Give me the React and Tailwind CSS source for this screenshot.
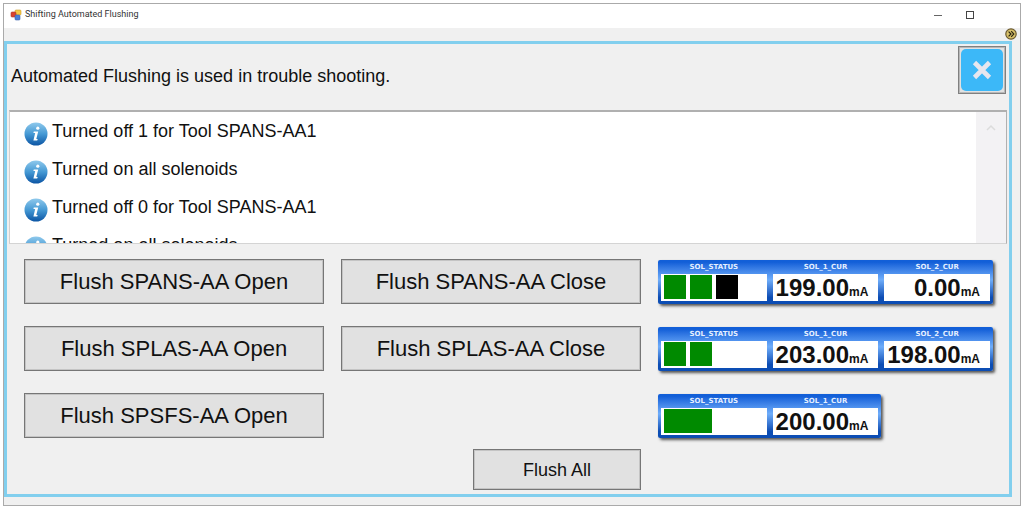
import { useState } from "react";
import clsx from "clsx";

const messages = [
  "Turned off 1 for Tool SPANS-AA1",
  "Turned on all solenoids",
  "Turned off 0 for Tool SPANS-AA1",
  "Turned on all solenoids",
];

const tools = [
  {
    name: "SPANS-AA",
    canClose: true,
    status: ["w-[22px] bg-[#008a00]", "w-[22px] bg-[#008a00]", "w-[22px] bg-black"],
    currents: ["199.00", "0.00"],
  },
  {
    name: "SPLAS-AA",
    canClose: true,
    status: ["w-[22px] bg-[#008a00]", "w-[22px] bg-[#008a00]"],
    currents: ["203.00", "198.00"],
  },
  {
    name: "SPSFS-AA",
    canClose: false,
    status: ["w-[48px] bg-[#008a00]"],
    currents: ["200.00"],
  },
];

const AppIcon = () => (
  <svg viewBox="0 0 12 12" className="h-3 w-3" aria-hidden="true">
    <rect x="5" y="1" width="6" height="5" rx="1" fill="#f5c945" stroke="#c99a2a" strokeWidth="0.6" />
    <rect x="1" y="3" width="5" height="5" rx="1" fill="#d9432f" stroke="#a93a2c" strokeWidth="0.6" />
    <rect x="5" y="6" width="5" height="5" rx="1" fill="#4a7fd8" stroke="#3a62ad" strokeWidth="0.6" />
  </svg>
);

const InfoIcon = () => (
  <svg viewBox="0 0 24 24" className="h-6 w-6 shrink-0" aria-hidden="true">
    <defs>
      <linearGradient id="infoFill" x1="0" y1="0" x2="0" y2="1">
        <stop offset="0" stopColor="#8fc9ec" />
        <stop offset="0.5" stopColor="#4599d4" />
        <stop offset="1" stopColor="#0c55a4" />
      </linearGradient>
    </defs>
    <circle cx="12" cy="12" r="11.5" fill="url(#infoFill)" />
    <circle cx="13.8" cy="6.2" r="1.6" fill="#fff" />
    <path d="M9.8 9.6h4.4l-1.9 7.4h1.4l-.5 1.5H9.400l1.8-7.400H9.400z" fill="#fff" />
  </svg>
);

const OverflowIcon = () => (
  <svg viewBox="0 0 12 12" className="h-3 w-3" aria-hidden="true">
    <circle cx="6" cy="6" r="5.2" fill="#d9c26a" stroke="#6b5a30" strokeWidth="1.2" />
    <path d="M3.6 3.6 6 6 3.6 8.4M6.200 3.200 8.800 6 6.200 8.800" fill="none" stroke="#2b2512" strokeWidth="1.2" />
  </svg>
);

const CloseIcon = () => (
  <svg viewBox="0 0 42 42" className="h-[42px] w-[42px]" aria-hidden="true">
    <rect width="42" height="42" rx="5" fill="#3cb8f8" />
    <path d="M13.500 13.500 28.500 28.500M28.500 13.500 13.500 28.500" stroke="#e6e6ee" strokeWidth="4.600" />
  </svg>
);

const TitleBar = () => (
  <header className="flex h-6 items-center bg-white pb-[2px] pl-[6px] pr-2">
    <AppIcon />
    <h1 className="ml-[3px] font-['Roboto',sans-serif] text-[9px] text-[#333]">Shifting Automated Flushing</h1>
    <div className="ml-auto flex items-center gap-3">
      <button type="button" aria-label="Minimize" className="flex h-5 w-5 items-center justify-center">
        <span className="h-px w-2 bg-[#666]" />
      </button>
      <button type="button" aria-label="Maximize" className="flex h-5 w-5 items-center justify-center">
        <span className="h-2 w-2 border border-[#444]" />
      </button>
      <button type="button" aria-label="Close window" className="h-5 w-5" />
    </div>
  </header>
);

const FlushButton = ({ children, className, onClick }) => (
  <button
    type="button"
    onClick={onClick}
    className={clsx(
      "border border-[#767676] bg-[#e1e1e1] text-[#111] ring-1 ring-inset ring-[#c4c4c4] hover:bg-[#e5f1fb]",
      className
    )}
  >
    {children}
  </button>
);

const GaugeCell = ({ label, children }) => (
  <div className="flex min-w-0 flex-1 flex-col">
    <div className="h-[14px] text-center font-['DejaVu_Sans',sans-serif] text-[7px] font-bold leading-[14px] text-[#e4efff]">
      {label}
    </div>
    <div className="mx-[3px] flex h-[27px] items-center bg-white">{children}</div>
  </div>
);

const Gauge = ({ tool }) => (
  <div
    className={clsx(
      "flex h-11 rounded-xs bg-linear-to-b from-[#125fd8] from-5% via-[#6fadfa] via-45% to-[#0c4db4] to-85% shadow-[2px_2px_3px_#555]",
      tool.currents.length === 2 ? "w-full" : "w-2/3"
    )}
  >
    <GaugeCell label="SOL_STATUS">
      <div className="flex gap-1 pl-[3px]">
        {tool.status.map((color, i) => (
          <span key={i} className={clsx("h-6", color)} />
        ))}
      </div>
    </GaugeCell>
    {tool.currents.map((value, i) => (
      <GaugeCell key={i} label={`SOL_${i + 1}_CUR`}>
        <div className="flex w-full items-baseline justify-end pr-[10px] text-[#111]">
          <span className="text-2xl font-bold leading-[27px]">{value}</span>
          <span className="text-xs font-bold">mA</span>
        </div>
      </GaugeCell>
    ))}
  </div>
);

const App = () => {
  const [log, setLog] = useState(messages);

  const addMessage = (text) => setLog((prev) => [text, ...prev]);

  return (
    <div className="bg-white p-[3px] font-['Liberation_Sans',Arial,sans-serif]">
      <div className="border border-[#aaa] bg-[#f0f0f0] pb-2">
        <TitleBar />
        <div className="flex h-[13px] items-start justify-end pr-[3px]">
          <button type="button" aria-label="More">
            <OverflowIcon />
          </button>
        </div>

        <main className="mr-2 border-3 border-[#82cfee]">
          <div className="flex h-[66px] items-start justify-between pl-1 pr-[3px]">
            <p className="pt-5 text-lg leading-6 text-[#111]">Automated Flushing is used in trouble shooting.</p>
            <button
              type="button"
              aria-label="Close"
              className="mt-[2px] flex h-12 w-12 items-center justify-center border border-[#808080] bg-[#e1e1e1] ring-1 ring-inset ring-[#b8b8b8]"
            >
              <CloseIcon />
            </button>
          </div>

          {/* Message log */}
          <div className="mx-[2px] flex h-[134px] border border-t-2 border-[#b0b0b0] border-b-[#d4d4d4] border-l-[#d0d0d0] bg-white">
            <ul className="min-w-0 flex-1 overflow-hidden pl-[14px]">
              {log.map((message, i) => (
                <li key={i} className="flex h-[38px] items-start gap-1">
                  <span className="mt-[10px]">
                    <InfoIcon />
                  </span>
                  <span className="pt-[7px] text-lg leading-6 text-[#111]">{message}</span>
                </li>
              ))}
            </ul>
            <div className="flex w-[30px] justify-center bg-[#f3f2f4] pt-3">
              <svg viewBox="0 0 12 8" className="h-2 w-3" aria-hidden="true">
                <path d="M2 6 6 2l4 4" fill="none" stroke="#dcdcdc" strokeWidth="1.5" />
              </svg>
            </div>
          </div>

          {/* Flush controls */}
          <div className="flex flex-col gap-[22px] pb-1 pl-[17px] pr-4 pt-[15px]">
            {tools.map((tool) => (
              <div key={tool.name} className="grid grid-cols-[300fr_300fr_335fr] items-center gap-[17px]">
                <FlushButton
                  className="h-[45px] text-[22px]"
                  onClick={() => addMessage(`Turned on ${tool.name}`)}
                >
                  Flush {tool.name} Open
                </FlushButton>
                {tool.canClose ? (
                  <FlushButton
                    className="h-[45px] text-[22px]"
                    onClick={() => addMessage(`Turned off ${tool.name}`)}
                  >
                    Flush {tool.name} Close
                  </FlushButton>
                ) : (
                  <span />
                )}
                <Gauge tool={tool} />
              </div>
            ))}
          </div>
          <div className="grid grid-cols-[300fr_300fr_335fr] gap-[17px] pb-1 pl-[17px] pr-4 pt-[7px]">
            <FlushButton
              className="col-start-2 h-[41px] w-[168px] justify-self-end text-lg"
              onClick={() => addMessage("Turned on all solenoids")}
            >
              Flush All
            </FlushButton>
          </div>
        </main>
      </div>
    </div>
  );
};

export default App;
